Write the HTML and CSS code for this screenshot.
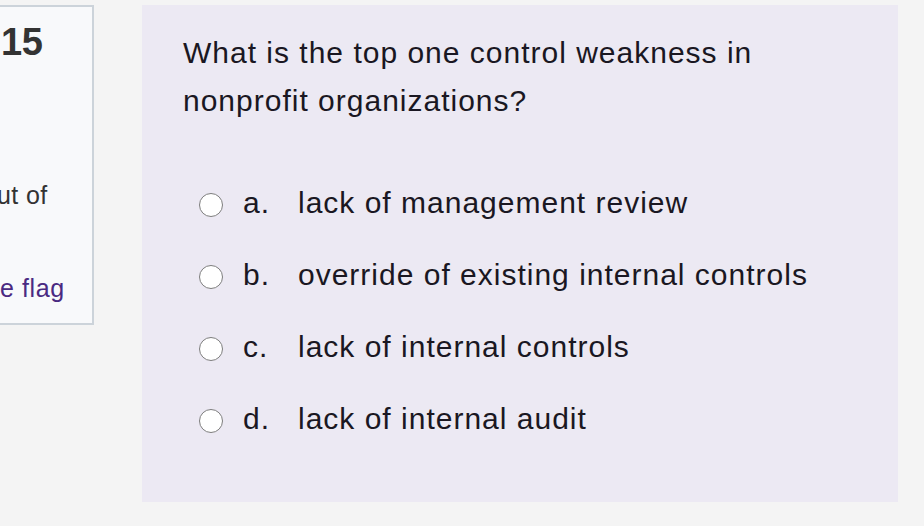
FILE: index.html
```html
<!DOCTYPE html>
<html lang="en">
<head>
<meta charset="utf-8">
<title>Question 15</title>
<link rel="stylesheet" href="styles.css">
</head>
<body>
<div class="page">
  <aside class="info">
    <div class="qno">15</div>
    <div class="mark">ut of</div>
    <div class="flag">e flag</div>
  </aside>
  <main class="content">
    <div class="qtext">What is the top one control weakness in nonprofit organizations?</div>
    <div class="answers">
      <label class="opt"><span class="radio"></span><span class="letter">a.</span><span class="text">lack of management review</span></label>
      <label class="opt"><span class="radio"></span><span class="letter">b.</span><span class="text">override of existing internal controls</span></label>
      <label class="opt"><span class="radio"></span><span class="letter">c.</span><span class="text">lack of internal controls</span></label>
      <label class="opt"><span class="radio"></span><span class="letter">d.</span><span class="text">lack of internal audit</span></label>
    </div>
  </main>
</div>
</body>
</html>
```
FILE: styles.css
```css
html, body {
  margin: 0;
  padding: 0;
  background: #f4f4f4;
  font-family: "Liberation Sans", Arial, Helvetica, sans-serif;
}
.page {
  display: flex;
  align-items: flex-start;
  gap: 48px;
  padding-top: 5px;
}
.info {
  box-sizing: border-box;
  width: 104px;
  height: 320px;
  margin-left: -10px;
  padding: 11px 0 0 9px;
  background: #f8f9fb;
  border: 2px solid #ccd3da;
  color: #333333;
  display: flex;
  flex-direction: column;
}
.qno {
  font-size: 38px;
  font-weight: bold;
  line-height: 48px;
  letter-spacing: -0.5px;
}
.mark {
  margin-top: 114px;
  margin-left: -4px;
  font-size: 25px;
  line-height: 30px;
  letter-spacing: 0.4px;
}
.flag {
  margin-top: 63px;
  margin-left: -1px;
  font-size: 25px;
  line-height: 30px;
  letter-spacing: 0.6px;
  color: #4a2a82;
}
.content {
  box-sizing: border-box;
  width: 756px;
  height: 497px;
  background: #ece9f3;
  padding: 24px 40px 0 41px;
  color: #1a1722;
}
.qtext {
  font-size: 30px;
  line-height: 48px;
  letter-spacing: 1px;
  width: 620px;
}
.answers {
  margin-top: 42px;
  display: flex;
  flex-direction: column;
}
.opt {
  display: flex;
  align-items: center;
  height: 72px;
  font-size: 30px;
  letter-spacing: 1px;
}
.radio {
  box-sizing: border-box;
  width: 24px;
  height: 24px;
  margin: 4px 20px 0 16px;
  border: 1.5px solid #7d7d7d;
  border-radius: 50%;
  background: #ffffff;
  flex: none;
}
.letter {
  width: 55px;
  flex: none;
}
```
